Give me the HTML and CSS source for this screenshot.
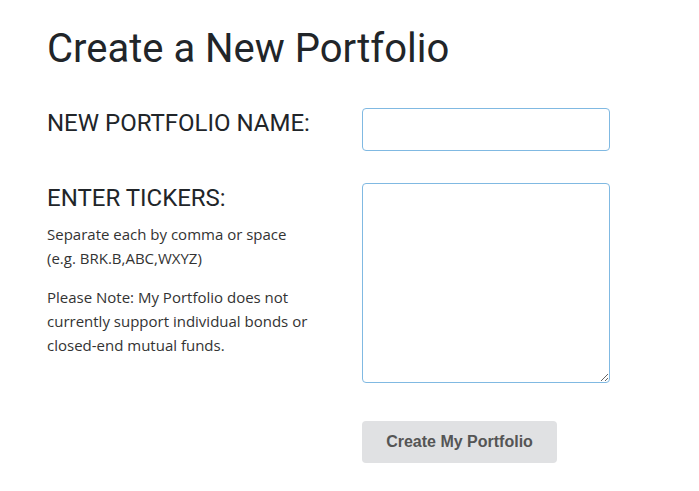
FILE: index.html
```html
<!DOCTYPE html>
<html>
<head>
<meta charset="utf-8">
<link rel="stylesheet" href="styles.css">
</head>
<body>
<main class="page">
  <h1 class="title">Create a New Portfolio</h1>
  <form class="form">
    <div class="row">
      <div class="label-col">
        <label class="label">NEW PORTFOLIO NAME:</label>
      </div>
      <div class="field-col">
        <input class="input" type="text">
      </div>
    </div>
    <div class="row row-tickers">
      <div class="label-col">
        <label class="label">ENTER TICKERS:</label>
        <p class="help">Separate each by comma or space<br>(e.g. BRK.B,ABC,WXYZ)</p>
        <p class="help">Please Note: My Portfolio does not currently support individual bonds or closed-end mutual funds.</p>
      </div>
      <div class="field-col">
        <textarea class="textarea"></textarea>
      </div>
    </div>
    <div class="row row-actions">
      <div class="label-col"></div>
      <div class="field-col">
        <button class="btn" type="button">Create My Portfolio</button>
      </div>
    </div>
  </form>
</main>
</body>
</html>
```
FILE: styles.css
```css
* { box-sizing: border-box; }
html, body { margin: 0; padding: 0; background: #fff; }
.page {
  padding: 25px 0 0 47px;
  font-family: "Open Sans", sans-serif;
  color: #333;
}
.title {
  margin: 0 0 35px;
  font-family: Roboto, sans-serif;
  font-weight: 400;
  font-size: 40px;
  line-height: 48px;
  color: #212529;
}
.row {
  display: grid;
  grid-template-columns: 315px 248px;
}
.row-tickers { margin-top: 32px; }
.row-actions { margin-top: 38px; }
.label {
  display: block;
  font-family: Roboto, sans-serif;
  font-weight: 400;
  font-size: 24px;
  line-height: 30px;
  color: #212529;
  margin-top: 0;
}
.row-tickers .label { margin-bottom: 9px; }
.help {
  margin: 0 0 15px;
  font-size: 15px;
  line-height: 24px;
  width: 270px;
}
.input {
  display: block;
  width: 248px;
  height: 43px;
  border: 1px solid #80b9e2;
  border-radius: 4px;
  background: #fff;
  margin: 0;
}
.textarea {
  display: block;
  width: 248px;
  height: 200px;
  border: 1px solid #80b9e2;
  border-radius: 4px;
  background: #fff;
  margin: 0;
  resize: vertical;
}
.btn {
  display: block;
  width: 195px;
  height: 42px;
  border: none;
  border-radius: 4px;
  background: #e0e1e3;
  color: #555;
  font-family: "Liberation Sans", Arial, sans-serif;
  font-weight: 700;
  font-size: 16px;
}
```
